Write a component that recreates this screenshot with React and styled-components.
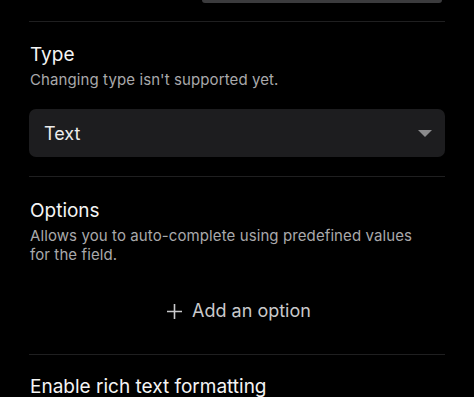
import React from 'react'
import styled, { createGlobalStyle } from 'styled-components'

const GlobalStyle = createGlobalStyle`
  html, body {
    margin: 0;
    padding: 0;
    background: #000;
  }
  body {
    font-family: Inter, "Noto Sans", sans-serif;
    -webkit-font-smoothing: antialiased;
  }
`

const Page = styled.div`
  width: 474px;
  height: 397px;
  overflow: hidden;
  padding: 0 29px;
  box-sizing: border-box;
  background: #000;
`

const TopRow = styled.div`
  height: 21px;
  display: flex;
  justify-content: flex-end;
  align-items: flex-start;
`

const TopField = styled.div`
  width: 240px;
  height: 3px;
  margin-right: 3px;
  background: #3b3b3d;
  border-radius: 0 0 3px 3px;
`

const Divider = styled.div`
  height: 1px;
  background: #1f1f20;
`

const Section = styled.div`
  padding: ${({ $top }) => $top || 22}px 1px ${({ $bottom }) => $bottom || 0}px;
`

const Heading = styled.div`
  font-size: 19px;
  line-height: 22px;
  color: #f4f4f4;
  font-weight: 400;
`

const Hint = styled.div`
  margin-top: 4px;
  font-size: 15px;
  line-height: 19px;
  color: #a9a9ab;
  letter-spacing: 0.1px;
`

const Select = styled.div`
  margin: 20px -1px 0;
  height: 48px;
  border-radius: 7px;
  background: #1d1d1f;
  display: flex;
  align-items: center;
  justify-content: space-between;
  padding: 0 13px 0 15px;
  font-size: 18px;
  color: #ececec;
`

const AddButton = styled.div`
  display: flex;
  justify-content: center;
  align-items: center;
  gap: 9px;
  margin-top: 36px;
  padding-left: 3px;
  font-size: 18px;
  line-height: 22px;
  color: #c9c9cb;
`

const Caret = () => (
  <svg width="14" height="7" viewBox="0 0 14 7">
    <path d="M0 0 H14 L7 7 Z" fill="#8b8b8d" />
  </svg>
)

const Plus = () => (
  <svg width="17" height="17" viewBox="0 0 17 17">
    <path d="M8.5 1 V16 M1 8.5 H16" stroke="#c9c9cb" strokeWidth="1.6" />
  </svg>
)

export default function App() {
  return (
    <Page>
      <GlobalStyle />
      <TopRow>
        <TopField />
      </TopRow>
      <Divider />
      <Section $bottom={19}>
        <Heading>Type</Heading>
        <Hint>Changing type isn't supported yet.</Hint>
        <Select>
          <span>Text</span>
          <Caret />
        </Select>
      </Section>
      <Divider />
      <Section $top={23} $bottom={32}>
        <Heading>Options</Heading>
        <Hint>
          Allows you to auto-complete using predefined values
          <br />
          for the field.
        </Hint>
        <AddButton>
          <Plus />
          <span>Add an option</span>
        </AddButton>
      </Section>
      <Divider />
      <Section $top={21}>
        <Heading>Enable rich text formatting</Heading>
      </Section>
    </Page>
  )
}
